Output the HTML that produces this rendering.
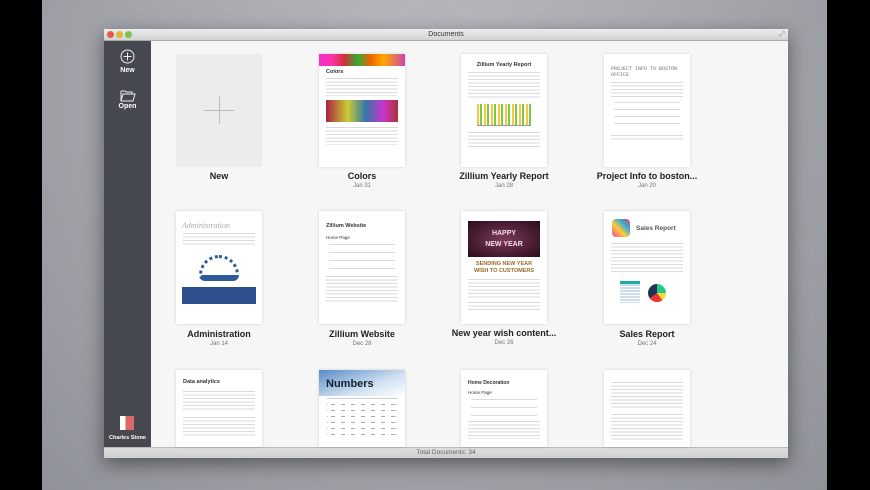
<!DOCTYPE html>
<html><head><meta charset="utf-8"><style>
*{margin:0;padding:0;box-sizing:border-box}
body{width:870px;height:490px;overflow:hidden;background:#000;font-family:"Liberation Sans",sans-serif;position:relative}
.bg{position:absolute;left:42px;top:0;width:785px;height:490px;background:radial-gradient(ellipse at 50% 20%,#b9bbc0 0%,#a6a8ae 50%,#8f9298 100%)}
.win{position:absolute;left:104px;top:29px;width:684px;height:429px;background:#f6f6f6;box-shadow:0 6px 18px rgba(0,0,0,.45);overflow:hidden}
.tb{position:absolute;left:0;top:0;width:684px;height:12px;background:linear-gradient(#ececec,#d2d2d2);border-bottom:1px solid #aaa;font-size:7px;text-align:center;line-height:12px;color:#333}
.dot{position:absolute;top:2px;width:7px;height:7px;border-radius:50%}
.side{position:absolute;left:0;top:12px;width:47px;height:406px;background:#464850;color:#fff;font-size:7px;font-weight:bold;text-align:center}
.bot{position:absolute;left:0;top:418px;width:684px;height:11px;background:linear-gradient(#dedede,#cfcfcf);border-top:1px solid #bbb;font-size:6.5px;color:#666;text-align:center;line-height:10px}
.card{position:absolute;width:86px;background:#fff;box-shadow:0 0 3px rgba(0,0,0,.15);overflow:hidden}
.t{position:absolute;width:150px;text-align:center;font-size:9px;font-weight:bold;color:#222}
.d{position:absolute;width:150px;text-align:center;font-size:6px;color:#777}
.ln{margin:0 7px;background:repeating-linear-gradient(to bottom,#dadada 0 1px,transparent 1px 3.5px)}
.h{font-size:5.5px;font-weight:bold;color:#333;margin:0 7px}
</style></head><body>
<div class="bg"></div>
<div class="win">
 <div class="tb">Documents
  <div class="dot" style="left:3px;background:#e5574f"></div>
  <div class="dot" style="left:12px;background:#e3b43a"></div>
  <div class="dot" style="left:21px;background:#7fc04f"></div>
  <div style="position:absolute;right:3px;top:2px;font-size:7px;color:#888;line-height:8px">⤢</div>
 </div>
 <div class="side">
  <svg style="position:absolute;left:16px;top:8px" width="15" height="15" viewBox="0 0 15 15"><circle cx="7.5" cy="7.5" r="6.5" fill="none" stroke="#eee" stroke-width="1"/><path d="M7.5 3.5v8M3.5 7.5h8" stroke="#eee" stroke-width="1"/></svg>
  <div style="position:absolute;left:0;width:47px;top:26px">New</div>
  <svg style="position:absolute;left:16px;top:48px" width="16" height="13" viewBox="0 0 16 13"><path d="M1 2h4l1 1h6v2M1 2v10h12l2-7H3L1 12" fill="none" stroke="#eee" stroke-width="1"/></svg>
  <div style="position:absolute;left:0;width:47px;top:62px">Open</div>
  <div style="position:absolute;left:16px;top:375px;width:14px;height:14px;background:linear-gradient(90deg,#fff 0 40%,#d66 40% 100%)"></div>
  <div style="position:absolute;left:0;width:47px;top:394px;font-size:5.5px">Charles Stone</div>
 </div>
 <div class="bot">Total Documents: 34</div>
</div>
<div class="card" style="left:176px;top:54px;height:113px;background:#ececec;box-shadow:none">
 <div style="position:absolute;left:28px;top:56px;width:30px;height:1px;background:#bbb"></div>
 <div style="position:absolute;left:43px;top:42px;width:1px;height:28px;background:#bbb"></div>
</div>
<div class="t" style="left:144px;top:171px">New</div>

<div class="card" style="left:319px;top:54px;height:113px">
 <div style="height:12px;background:linear-gradient(90deg,#e3c 0,#f3a 15%,#c33 30%,#3a3 45%,#e60 60%,#fa0 75%,#c4a 100%)"></div>
 <div class="h" style="margin-top:3px">Colors</div>
 <div class="ln" style="height:18px;margin-top:3px"></div>
 <div style="margin:4px 7px 0;height:22px;background:linear-gradient(90deg,#a24 0,#cc3 30%,#37a 55%,#c3c 80%,#a33 100%)"></div>
 <div class="ln" style="height:18px;margin-top:5px"></div>
</div>
<div class="t" style="left:287px;top:171px">Colors</div><div class="d" style="left:287px;top:183px">Jan 31</div>

<div class="card" style="left:461px;top:54px;height:113px">
 <div class="h" style="text-align:center;margin-top:8px">Zillium Yearly Report</div>
 <div class="ln" style="height:26px;margin-top:4px"></div>
 <div style="margin:6px 16px 0;height:22px;background:repeating-linear-gradient(90deg,#f4c842 0 2px,#fff 2px 3px,#7c4 3px 5px,#fff 5px 7px);border-bottom:1px solid #999"></div>
 <div class="ln" style="height:15px;margin-top:6px"></div>
</div>
<div class="t" style="left:429px;top:171px">Zillium Yearly Report</div><div class="d" style="left:429px;top:183px">Jan 28</div>

<div class="card" style="left:604px;top:54px;height:113px">
 <div style="font-family:'Liberation Mono',monospace;font-size:5px;color:#777;margin:12px 7px 0">PROJECT INFO TO BOSTON OFFICE</div>
 <div class="ln" style="height:15px;margin-top:4px"></div>
 <div class="ln" style="height:28px;margin:5px 10px 0;background:repeating-linear-gradient(to bottom,#dadada 0 1px,transparent 1px 7px)"></div>
 <div class="ln" style="height:6px;margin-top:5px"></div>
</div>
<div class="t" style="left:572px;top:171px">Project Info to boston...</div><div class="d" style="left:572px;top:183px">Jan 20</div>

<div class="card" style="left:176px;top:211px;height:113px">
 <div style="font-family:'Liberation Serif',serif;font-style:italic;font-size:8px;color:#aaa;margin:10px 6px 0">Administration</div>
 <div class="ln" style="height:14px;margin-top:3px"></div>
 <div style="margin:8px auto 0;width:40px;height:26px;border-radius:20px 20px 6px 6px;border:3px dotted #2d5a9a;border-bottom:6px solid #2d5a9a"></div>
 <div style="margin:6px 6px 0;height:17px;background:#2d4f8e"></div>
</div>
<div class="t" style="left:144px;top:329px">Administration</div><div class="d" style="left:144px;top:341px">Jan 14</div>

<div class="card" style="left:319px;top:211px;height:113px">
 <div class="h" style="margin-top:12px">Zillium Website</div>
 <div class="h" style="margin-top:6px;font-weight:normal;font-size:4.5px">Home Page</div>
 <div class="ln" style="height:28px;margin:4px 10px 0;background:repeating-linear-gradient(to bottom,#dadada 0 1px,transparent 1px 8px)"></div>
 <div class="ln" style="height:28px;margin-top:4px"></div>
</div>
<div class="t" style="left:287px;top:329px">Zillium Website</div><div class="d" style="left:287px;top:341px">Dec 28</div>

<div class="card" style="left:461px;top:211px;height:113px">
 <div style="margin:10px 7px 0;height:36px;background:radial-gradient(#7a3a5a,#2a0a1a);color:#f4dcea;font-size:7px;font-weight:bold;text-align:center;line-height:11px;padding-top:7px">HAPPY<br>NEW YEAR</div>
 <div style="font-size:5.5px;font-weight:bold;color:#9a6a2a;text-align:center;margin-top:4px;line-height:7px">SENDING NEW YEAR<br>WISH TO CUSTOMERS</div>
 <div class="ln" style="height:20px;margin-top:4px"></div>
 <div class="ln" style="height:9px;margin-top:3px"></div>
</div>
<div class="t" style="left:429px;top:328px">New year wish content...</div><div class="d" style="left:429px;top:340px">Dec 26</div>

<div class="card" style="left:604px;top:211px;height:113px">
 <div style="position:absolute;left:8px;top:8px;width:18px;height:18px;background:linear-gradient(45deg,#e4a 0,#fc3 40%,#3ad 70%,#e44 100%);border-radius:4px"></div>
 <div style="position:absolute;left:32px;top:14px;font-size:6.5px;font-weight:bold;color:#555">Sales Report</div>
 <div class="ln" style="position:absolute;left:0;right:0;top:32px;height:29px"></div>
 <div style="position:absolute;left:16px;top:70px;width:20px;height:22px;background:repeating-linear-gradient(#cde 0 2px,#fff 2px 3px);border-top:3px solid #2aa"></div>
 <div style="position:absolute;left:44px;top:73px;width:18px;height:18px;border-radius:50%;background:conic-gradient(#2c8 0 25%,#ed3 25% 40%,#e33 40% 65%,#235 65% 100%)"></div>
</div>
<div class="t" style="left:572px;top:329px">Sales Report</div><div class="d" style="left:572px;top:341px">Dec 24</div>

<div class="card" style="left:176px;top:370px;height:77px">
 <div class="h" style="margin-top:9px">Data analytics</div>
 <div class="ln" style="height:20px;margin-top:6px"></div>
 <div class="ln" style="height:20px;margin-top:6px"></div>
</div>
<div class="card" style="left:319px;top:370px;height:77px">
 <div style="height:26px;background:linear-gradient(160deg,#5a8cc8,#cfe0f0 60%,#fff);font-size:11px;font-weight:bold;color:#123;padding:9px 0 0 7px;line-height:10px">Numbers</div>
 <div style="margin:2px 8px 0;height:40px;border:1px solid #ccc;background:repeating-linear-gradient(90deg,transparent 0 3px,#aaa 3px 7px,transparent 7px 10px);-webkit-mask:repeating-linear-gradient(#000 0 1px,transparent 1px 6px)"></div>
</div>
<div class="card" style="left:461px;top:370px;height:77px">
 <div class="h" style="margin-top:10px;font-size:5px">Home Decoration</div>
 <div class="h" style="margin-top:4px;font-size:4.5px;font-weight:normal">Home Page</div>
 <div class="ln" style="height:18px;margin:4px 10px 0;background:repeating-linear-gradient(to bottom,#dadada 0 1px,transparent 1px 8px)"></div>
 <div class="ln" style="height:18px;margin-top:4px"></div>
</div>
<div class="card" style="left:604px;top:370px;height:77px">
 <div class="ln" style="height:26px;margin-top:12px"></div>
 <div class="ln" style="height:26px;margin-top:6px"></div>
</div>
</body></html>
